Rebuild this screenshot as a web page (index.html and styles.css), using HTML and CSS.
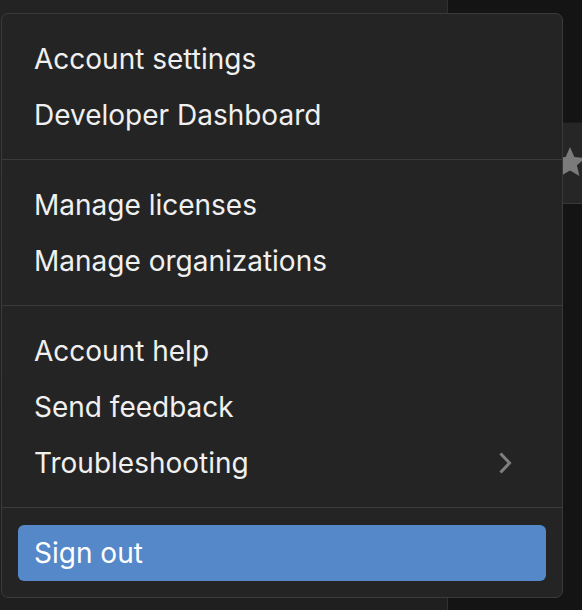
FILE: index.html
```html
<!DOCTYPE html>
<html lang="en">
<head>
<meta charset="utf-8">
<title>Account menu</title>
<link rel="stylesheet" href="styles.css">
</head>
<body>
<div class="app">
  <div class="sidebar"></div>
  <div class="main">
    <div class="toolbar">
      <svg class="star" width="34" height="34" viewBox="0 0 34 34" aria-hidden="true">
        <polygon fill="#7b7b7b" points="17,1 21.3,11.1 32.2,12.1 23.9,19.3 26.4,30 17,24.4 7.6,30 10.1,19.3 1.8,12.1 12.7,11.1"/>
      </svg>
    </div>
  </div>
</div>

<div class="menu" role="menu">
  <div class="group">
    <div class="item">Account settings</div>
    <div class="item">Developer Dashboard</div>
  </div>
  <div class="group">
    <div class="item">Manage licenses</div>
    <div class="item">Manage organizations</div>
  </div>
  <div class="group">
    <div class="item">Account help</div>
    <div class="item">Send feedback</div>
    <div class="item item-sub">
      <span>Troubleshooting</span>
      <svg class="chev" width="16" height="26" viewBox="0 0 16 26" aria-hidden="true">
        <path d="M2.5 3.5 L11.5 13 L2.5 22.5" fill="none" stroke="#7f7f7f" stroke-width="3"/>
      </svg>
    </div>
  </div>
  <div class="group">
    <div class="item item-active">Sign out</div>
  </div>
</div>
</body>
</html>
```

FILE: styles.css
```css
html, body {
  margin: 0;
  padding: 0;
}

body {
  width: 582px;
  height: 610px;
  overflow: hidden;
  position: relative;
  background: #141414;
  font-family: "Inter", "Noto Sans", "Liberation Sans", sans-serif;
}

.app {
  display: flex;
  height: 610px;
}

.sidebar {
  width: 447px;
  flex: none;
  background: linear-gradient(#232323, #1f1f1f);
  border-right: 1px solid #303030;
}

.main {
  flex: 1;
  background: #141414;
  padding-top: 122px;
}

.toolbar {
  height: 80px;
  background: #262626;
  border-top: 1px solid #1b1b1b;
  border-bottom: 1px solid #383838;
  display: flex;
  align-items: center;
  padding-left: 105px;
}

.star {
  display: block;
}

.menu {
  position: absolute;
  left: 1px;
  top: 13px;
  width: 562px;
  box-sizing: border-box;
  background: #242424;
  border: 1px solid #3a3a3a;
  border-radius: 7px;
}

.group {
  padding: 16.5px 0;
}

.group + .group {
  border-top: 1px solid #3a3a3a;
}

.item {
  height: 56px;
  display: flex;
  align-items: center;
  padding-left: 32px;
  padding-top: 1px;
  box-sizing: border-box;
  font-size: 28px;
  color: #f0f0f0;
}

.item-sub {
  justify-content: space-between;
  padding-right: 48px;
}

.chev {
  display: block;
  margin-top: -1px;
}

.item-active {
  margin: 0 16px;
  padding-left: 16px;
  background: #5588c8;
  border-radius: 6px;
  color: #ffffff;
}
```
